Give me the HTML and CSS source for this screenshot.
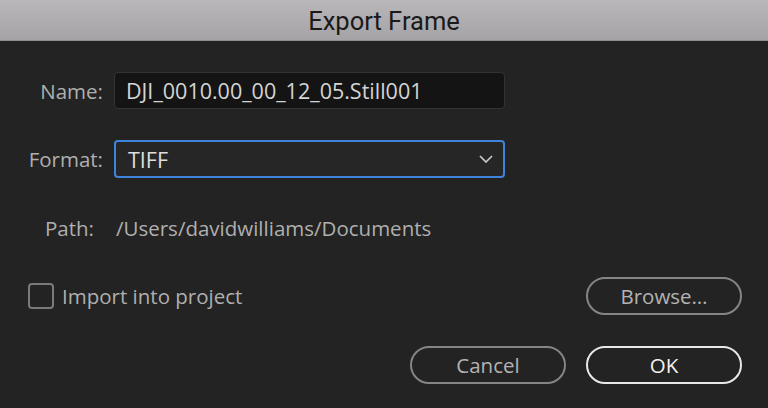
FILE: index.html
```html
<!DOCTYPE html>
<html>
<head>
<meta charset="utf-8">
<link rel="stylesheet" href="styles.css">
</head>
<body>
<div class="dialog">
  <div class="titlebar"><span class="title">Export Frame</span></div>
  <div class="content">
    <div class="form">
      <label class="label name-label">Name:</label>
      <div class="input">DJI_0010.00_00_12_05.Still001</div>
      <label class="label format-label">Format:</label>
      <div class="select"><span>TIFF</span>
        <svg class="chev" width="14" height="8" viewBox="0 0 14 8"><polyline points="1,1 7,7 13,1" fill="none" stroke="#c9c9c9" stroke-width="1.7"/></svg>
      </div>
      <label class="label path-label">Path:</label>
      <div class="path">/Users/davidwilliams/Documents</div>
    </div>
    <div class="import-row">
      <div class="check-wrap"><span class="checkbox"></span><span class="check-text">Import into project</span></div>
      <button class="btn">Browse…</button>
    </div>
    <div class="actions">
      <button class="btn">Cancel</button>
      <button class="btn primary">OK</button>
    </div>
  </div>
</div>
</body>
</html>
```
FILE: styles.css
```css
html, body { margin: 0; padding: 0; }
body {
  width: 768px; height: 408px; overflow: hidden;
  background: #232323;
  font-family: "Open Sans", "Noto Sans", sans-serif;
  font-weight: 500;
}
.dialog { display: flex; flex-direction: column; height: 408px; }
.titlebar {
  height: 40px;
  border-bottom: 1px solid #8f8e90;
  background: linear-gradient(#b9b7ba, #a5a3a6);
  display: flex; align-items: center; justify-content: center;
}
.title {
  font-family: Roboto, "Noto Sans", sans-serif;
  font-weight: 400;
  font-size: 25.5px; color: #1a1a1a; letter-spacing: 0;
  margin-top: 1px;
}
.content { display: flex; flex-direction: column; }
.form {
  display: grid;
  grid-template-columns: 103px 391px;
  column-gap: 11px;
  margin-top: 31px;
  align-items: center;
}
.label {
  justify-self: end;
  font-size: 20.5px; color: #afafaf;
}
.input {
  box-sizing: border-box; height: 37px;
  background: #141414; border: 1px solid #333;
  border-radius: 4px;
  color: #d4d4d4; font-size: 21.5px;
  padding-left: 11px;
  display: flex; align-items: center;
}
.select {
  margin-top: 31px;
  height: 38px; box-sizing: border-box;
  background: #262626; border: 2px solid #3f84dc;
  border-radius: 4px;
  color: #dedede; font-size: 21.5px;
  padding-left: 12px; padding-right: 10px;
  display: flex; align-items: center; justify-content: space-between;
}
.format-label { margin-top: 31px; }
.path-label { margin-top: 36px; padding-right: 9px; }
.path { margin-top: 36px; margin-left: 2px; font-size: 20.5px; color: #afafaf; }
.import-row {
  display: flex; justify-content: space-between; align-items: center;
  margin-top: 35px; padding-left: 28px; padding-right: 26px;
}
.check-wrap { display: flex; align-items: center; gap: 8px; }
.checkbox {
  width: 26px; height: 26px; box-sizing: border-box;
  border: 2px solid #7a7a7a; border-radius: 4px;
}
.check-text { font-size: 20.5px; color: #afafaf; }
.btn {
  width: 156px; height: 38px; box-sizing: border-box;
  border: 2px solid #858585; border-radius: 19px;
  background: transparent; color: #b3b3b3;
  font-family: "Open Sans", "Noto Sans", sans-serif;
  font-weight: 500;
  font-size: 20.5px; padding: 0;
}
.actions {
  display: flex; justify-content: flex-end; gap: 20px;
  margin-top: 31px; padding-right: 26px;
}
.btn.primary { border-color: #e8e8e8; color: #f2f2f2; }
```
